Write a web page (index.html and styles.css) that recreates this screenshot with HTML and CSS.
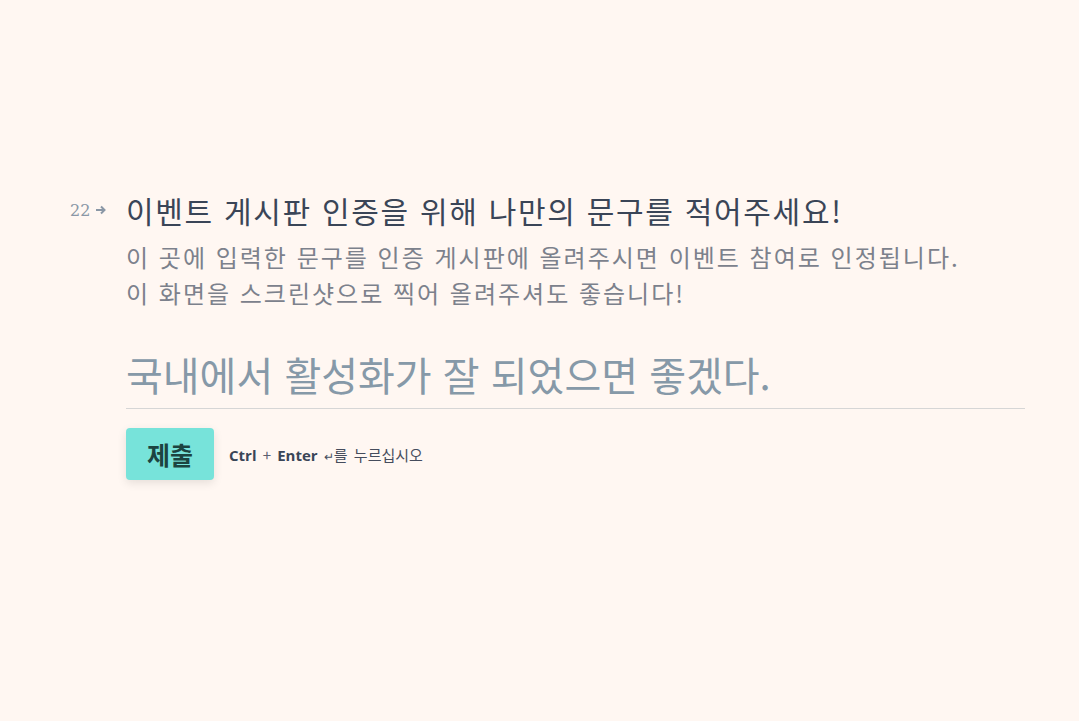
FILE: index.html
```html
<!DOCTYPE html>
<html lang="ko">
<head>
<meta charset="utf-8">
<link rel="stylesheet" href="styles.css">
</head>
<body>
<main class="page">
  <section class="question">
    <div class="qhead">
      <div class="num">22<svg class="arrow" viewBox="0 0 12 12" width="12" height="12"><path d="M1 6h8M6 2.5L9.5 6 6 9.5" fill="none" stroke="currentColor" stroke-width="2"/></svg></div>
      <div class="qbody">
        <h1 class="title">이벤트 게시판 인증을 위해 나만의 문구를 적어주세요!</h1>
        <p class="desc">이 곳에 입력한 문구를 인증 게시판에 올려주시면 이벤트 참여로 인정됩니다.<br>이 화면을 스크린샷으로 찍어 올려주셔도 좋습니다!</p>
        <div class="answer">국내에서 활성화가 잘 되었으면 좋겠다.</div>
        <div class="actions">
          <button class="submit">제출</button>
          <span class="hint"><b>Ctrl</b> <span class="plus">+</span> <b>Enter</b> <span class="ret">↵</span>를 누르십시오</span>
        </div>
      </div>
    </div>
  </section>
</main>
</body>
</html>
```
FILE: styles.css
```css
html, body { margin: 0; padding: 0; }
body {
  background: #fff7f2;
  font-family: "Noto Sans CJK KR", "Noto Sans", sans-serif;
  width: 1079px; height: 721px; overflow: hidden;
}
.page { padding-top: 190px; }
.qhead { display: flex; }
.num {
  width: 126px; box-sizing: border-box; padding-left: 70px;
  font-family: "DejaVu Serif", "Liberation Serif", serif;
  font-size: 16px; color: #8a97a6;
  display: flex; align-items: center; height: 40px;
}
.arrow { margin-left: 5px; color: #8a97a6; }
.qbody { width: 899px; }
.title {
  margin: 0; font-weight: 400; font-size: 30px; line-height: 40px;
  letter-spacing: 1.7px;
  color: #3a4557;
}
.desc {
  margin: 9px 0 0; font-size: 24px; line-height: 36px; color: #7c818c;
  letter-spacing: 2px;
}
.answer {
  margin-top: 38px; font-size: 40px; line-height: 50px; color: #8699a8;
  padding-bottom: 9px; border-bottom: 1px solid #d6d6d6;
}
.actions { display: flex; align-items: center; margin-top: 19px; }
.submit {
  width: 88px; height: 52px; border: 0; border-radius: 4px;
  background: #77e3da; color: #1c4440;
  font-family: "Noto Sans CJK KR", sans-serif; font-weight: 700; font-size: 25px;
  box-shadow: 0 3px 10px rgba(0,0,0,0.1);
}
.hint { margin-left: 15px; font-size: 15px; color: #454c5c; word-spacing: 2px; }
.hint b { font-family: "Open Sans", "Noto Sans", sans-serif; font-weight: 700; color: #3a4557; }
.plus { color: #5a6070; }
.ret { font-size: 12px; }
```
